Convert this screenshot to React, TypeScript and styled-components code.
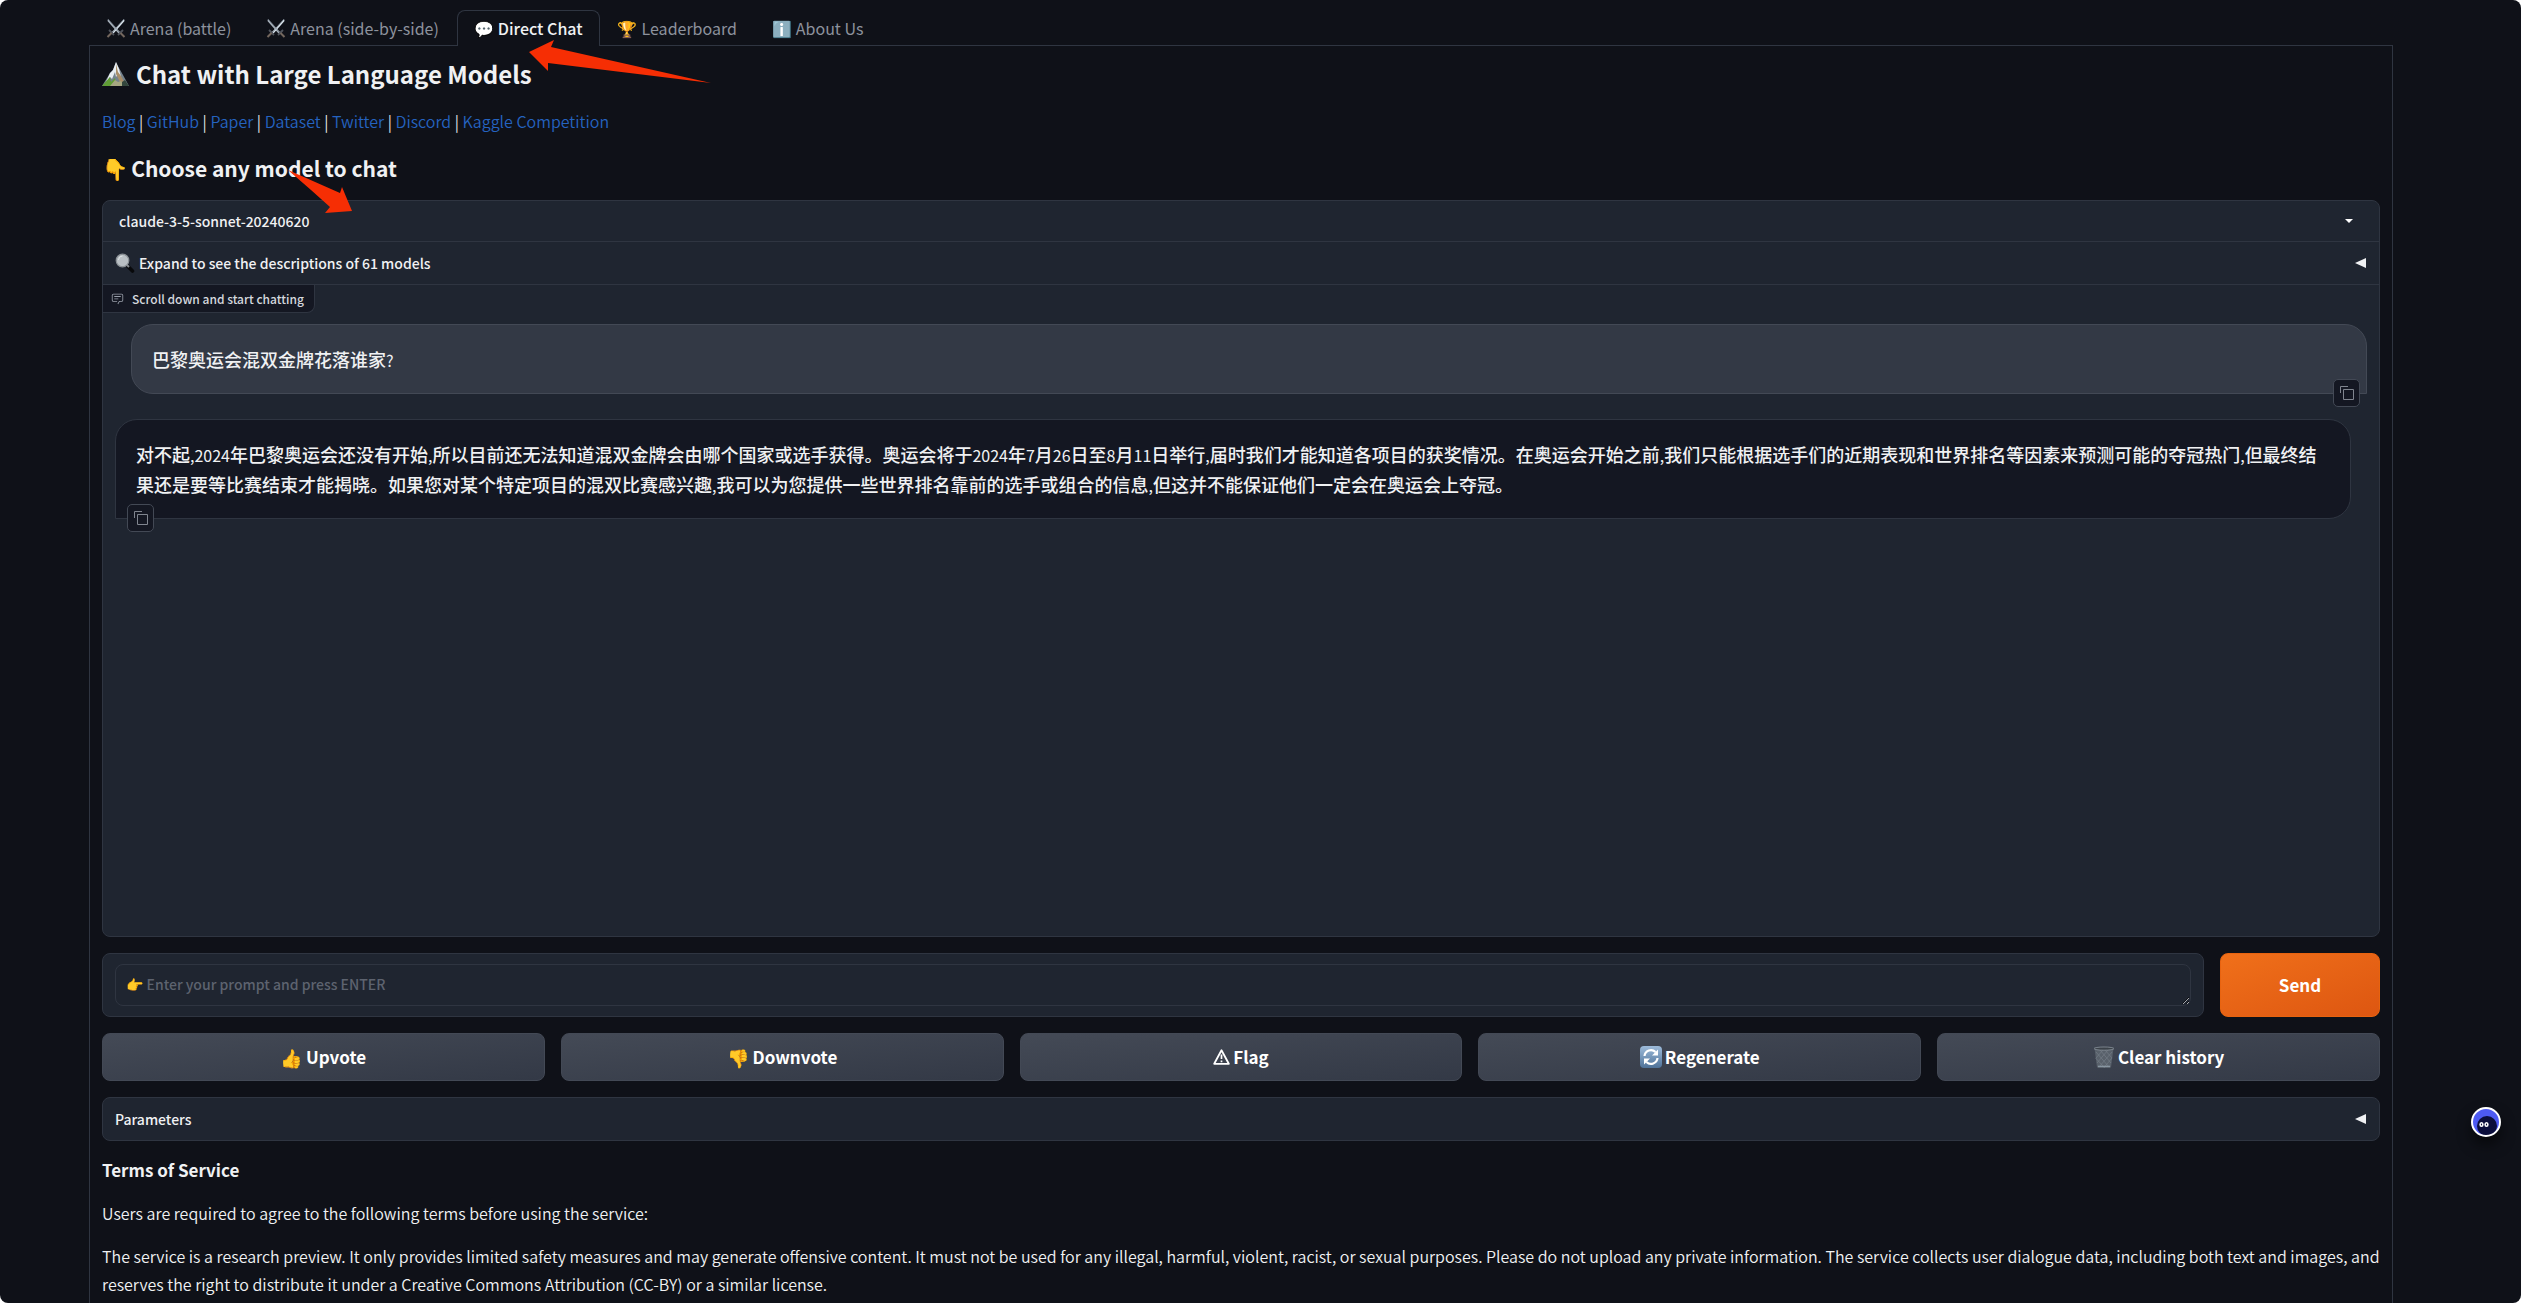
import React, { useState } from "react";
import styled, { createGlobalStyle, css } from "styled-components";

const color = {
  page: "#0f1118",
  panel: "#1f2530",
  deep: "#141722",
  bubble: "#333945",
  line: "#2f3541",
  lineLight: "#434955",
  text: "#f0f1f3",
  muted: "#8d929d",
  link: "#2563c0",
};

const Global = createGlobalStyle`
  *, *::before, *::after { box-sizing: border-box; }
  html { background: #fff; }
  body {
    margin: 0;
    color: ${color.text};
    font-family: "Noto Sans CJK SC", "Noto Color Emoji", sans-serif;
    font-size: 16px;
    line-height: 24px;
  }
  button, select, textarea { font: inherit; color: inherit; margin: 0; }
  h1, h2, h3, p { margin: 0; }
`;

const Shell = styled.div`
  position: relative;
  display: flex;
  flex-direction: column;
  min-height: 100vh;
  padding: 10px 128px 0 89px;
  background: ${color.page};
  border-radius: 8px;
`;

const TabBar = styled.nav`
  display: flex;
  gap: 1px;
  border-bottom: 1px solid ${color.line};
`;

const Tab = styled.button<{ $active?: boolean }>`
  display: flex;
  align-items: center;
  gap: 4px;
  height: 36px;
  margin-bottom: -1px;
  padding: 0 16px 2px;
  border: 1px solid transparent;
  border-bottom: 0;
  border-radius: 8px 8px 0 0;
  background: none;
  color: ${color.muted};
  ${(p) =>
    p.$active &&
    css`
      background: ${color.page};
      border-color: ${color.line};
      color: ${color.text};
      font-weight: 500;
    `}
`;

const Panel = styled.main`
  flex: 1;
  display: flex;
  flex-direction: column;
  padding: 12px 12px 0;
  border: 1px solid ${color.line};
  border-width: 0 1px;
`;

const Title = styled.h1`
  display: flex;
  align-items: center;
  gap: 7px;
  margin-bottom: 19px;
  font-size: 24px;
  line-height: 32px;
  font-weight: 700;
`;

const Links = styled.p`
  margin-bottom: 21px;
  font-weight: 350;
`;

const Anchor = styled.a`
  color: ${color.link};
  text-decoration: none;
`;

const Subtitle = styled.h3`
  display: flex;
  gap: 3px;
  margin-bottom: 18px;
  font-size: 21px;
  line-height: 28px;
  font-weight: 700;
`;

const Stack = styled.section`
  border: 1px solid ${color.line};
  border-radius: 8px;
  background: ${color.panel};
  overflow: hidden;
`;

const SelectRow = styled.label`
  display: flex;
  align-items: center;
  padding-right: 26px;
  border-bottom: 1px solid ${color.line};
`;

const ModelSelect = styled.select`
  flex: 1;
  height: 40px;
  padding: 0 16px;
  border: 0;
  background: none;
  appearance: none;
  font-size: 14px;
  font-weight: 500;
`;

const Fold = styled.button<{ $card?: boolean }>`
  display: flex;
  align-items: center;
  justify-content: space-between;
  width: 100%;
  height: 43px;
  padding: 0 13px 0 12px;
  border: 0 solid ${color.line};
  border-bottom-width: 1px;
  background: none;
  font-size: 14px;
  font-weight: 500;
  ${(p) =>
    p.$card &&
    css`
      height: 44px;
      margin: 16px 0 15px;
      border-width: 1px;
      border-radius: 8px;
      background: ${color.panel};
    `}
`;

const FoldLabel = styled.span`
  display: flex;
  align-items: center;
  gap: 4px;
`;

const Chat = styled.div`
  display: flex;
  flex-direction: column;
  align-items: flex-start;
  min-height: 651px;
`;

const ChatLabel = styled.div`
  display: flex;
  align-items: center;
  gap: 8px;
  height: 28px;
  padding: 0 10px 0 8px;
  border: 1px solid ${color.line};
  border-width: 0 1px 1px 0;
  border-bottom-right-radius: 8px;
  background: ${color.deep};
  font-size: 12px;
  font-weight: 500;
  color: #d5d8de;
`;

const Messages = styled.div`
  display: flex;
  flex-direction: column;
  gap: 25px;
  width: 100%;
  padding: 11px 12px;
`;

const Bubble = styled.div<{ $user?: boolean }>`
  position: relative;
  padding: 19px 20px;
  border: 1px solid ${(p) => (p.$user ? color.lineLight : color.line)};
  border-radius: ${(p) => (p.$user ? "22px 22px 0 22px" : "22px 22px 22px 0")};
  margin: ${(p) => (p.$user ? "0 0 0 16px" : "0 16px 0 0")};
  background: ${(p) => (p.$user ? color.bubble : color.deep)};
  font-size: 18px;
  font-weight: 500;
  line-height: 30px;
`;

const Latin = styled.span`
  font-size: 16px;
  line-height: 16px;
  font-weight: 400;
`;

const CopyButton = styled.button<{ $right?: boolean }>`
  position: absolute;
  bottom: -14px;
  ${(p) => (p.$right ? "right: 6px;" : "left: 11px;")}
  display: grid;
  place-items: center;
  width: 27px;
  height: 28px;
  padding: 0;
  border: 1px solid ${color.lineLight};
  border-radius: 5px;
  background: ${color.deep};
`;

const PromptRow = styled.form`
  display: flex;
  gap: 16px;
  margin: 16px 0;
`;

const PromptBox = styled.div`
  flex: 1;
  display: flex;
  padding: 10px 12px;
  border: 1px solid ${color.line};
  border-radius: 8px;
  background: ${color.panel};
`;

const Prompt = styled.textarea`
  flex: 1;
  height: 42px;
  padding: 9px 10px;
  border: 1px solid ${color.line};
  border-radius: 8px;
  background: none;
  resize: vertical;
  color-scheme: dark;
  font-size: 14px;
  font-weight: 500;
  line-height: 20px;
  overflow: hidden;
  &::placeholder { color: #5d636f; opacity: 1; }
`;

const SendButton = styled.button`
  width: 160px;
  border: 1px solid #e8630f;
  border-radius: 8px;
  background: linear-gradient(to bottom right, #f0701a, #dd5611);
  color: #fff;
  font-size: 17px;
  font-weight: 700;
`;

const Actions = styled.div`
  display: grid;
  grid-template-columns: repeat(5, 1fr);
  gap: 16px;
`;

const Action = styled.button`
  display: flex;
  align-items: center;
  justify-content: center;
  gap: 3px;
  height: 48px;
  border: 1px solid #434955;
  border-radius: 8px;
  background: linear-gradient(to bottom right, #444a56, #333946);
  color: #fff;
  font-size: 17px;
  font-weight: 700;
`;

const Emoji = styled.span`
  font-size: 18px;
`;

const Terms = styled.footer`
  display: flex;
  flex-direction: column;
  gap: 15px;
  line-height: 28px;
  font-weight: 350;
`;

const TermsTitle = styled.h2`
  font-size: 17px;
  line-height: 28px;
  font-weight: 700;
`;

const Arrows = styled.svg`
  position: absolute;
  top: 0;
  left: 0;
  pointer-events: none;
`;

const Assistant = styled.button`
  position: fixed;
  right: 20px;
  bottom: 166px;
  width: 30px;
  height: 30px;
  padding: 0;
  border: 0;
  border-radius: 50%;
  background: none;
  box-shadow: 0 8px 14px #0008;
`;

const Swords = () => (
  <svg width="20" height="20" viewBox="0 0 20 20" aria-hidden="true">
    <path d="M2 1l12 13-1.500 1.500L1.500 3z" fill="#a9b3bd" />
    <path d="M18 1L6 14l1.500 1.500L18.500 3z" fill="#dbe6ee" />
    <path d="M2 1l11.500 13.500M18 1L6.500 14.500" stroke="#67727d" strokeWidth=".6" />
    <path d="M3 12l5 5M17 12l-5 5" stroke="#50545c" strokeWidth="1.800" />
    <path d="M5.500 15L1.500 19M14.500 15l4 4" stroke="#74675d" strokeWidth="2" />
  </svg>
);

const Mountain = () => (
  <svg width="27" height="26" viewBox="0 0 27 26" aria-hidden="true">
    <path d="M0 25L5 17l3-5 3-3 3-8 3 6 4 7 6 11z" fill="#75838d" />
    <path d="M14 1l-3 8-3 3-4 9 4-5 2 2 3-7 1 5 2-3 3 3-2-8z" fill="#e9eef2" />
    <path d="M14 3l2 8 3 4 5 9-6-3-4-8z" fill="#a98e69" />
    <path d="M0 25l8-9 1 5 4-4 1 8z" fill="#609d35" />
    <path d="M8 25l5-6 3 2 3-1 3 5z" fill="#a6a781" />
    <path d="M20 21l3-2 4 6h-7z" fill="#33463c" />
  </svg>
);

const Magnifier = () => (
  <svg width="20" height="20" viewBox="0 0 20 20" aria-hidden="true">
    <path d="M12.500 13l5 5" stroke="#08090b" strokeWidth="3.600" strokeLinecap="round" />
    <path d="M11.500 11.500l2.500 2.500" stroke="#888d92" strokeWidth="2" />
    <circle cx="7.500" cy="7.500" r="6.300" fill="#b9bfc3" stroke="#8a9095" strokeWidth="1.200" />
    <path d="M3.500 7a4 4 0 0 1 4-4" stroke="#dfe3e5" fill="none" />
  </svg>
);

const Refresh = () => (
  <svg width="22" height="22" viewBox="0 0 22 22" aria-hidden="true">
    <defs>
      <linearGradient id="tile" x2="0" y2="1">
        <stop stopColor="#9dbbda" />
        <stop offset="1" stopColor="#4f7298" />
      </linearGradient>
    </defs>
    <rect width="22" height="22" rx="4" fill="url(#tile)" />
    <path d="M4.500 10a6.500 6.500 0 0 1 11-4M17.500 12a6.500 6.500 0 0 1-11 4" stroke="#fff" strokeWidth="2.200" fill="none" />
    <path d="M18 3.500v6h-6zM4 18.500v-6h6z" fill="#fff" />
  </svg>
);

const Trash = () => (
  <svg width="22" height="22" viewBox="0 0 22 22" aria-hidden="true">
    <path d="M1.500 2h19l-2.500 19.500H4z" fill="#59616b" />
    <path d="M3 6l13 15M7 4l11 13M12 4l7 8M2.500 12l9 9.500M19 6L6 21M15 4L4 17M10 4l-7 8M19 12l-8 9.500" stroke="#747d86" strokeWidth=".7" />
    <ellipse cx="11" cy="2.600" rx="10" ry="1.600" fill="#3b4148" stroke="#818a93" strokeWidth=".9" />
    <path d="M5 20.500h12" stroke="#8996a2" strokeWidth="1.600" />
  </svg>
);

const Warning = () => (
  <svg width="17" height="16" viewBox="0 0 17 16" fill="none" stroke="#fff" aria-hidden="true">
    <path d="M8.500 1.200L15.800 14.800H1.200z" strokeWidth="1.800" strokeLinejoin="round" />
    <path d="M8.500 5.500v4.500M8.500 11.500v1.700" strokeWidth="1.700" />
  </svg>
);

const ChatIcon = () => (
  <svg width="13" height="13" viewBox="0 0 32 32" fill="#9aa0ab" aria-hidden="true">
    <path d="M17.740 30L16 29l4-7h6a2 2 0 0 0 2-2V8a2 2 0 0 0-2-2H6a2 2 0 0 0-2 2v12a2 2 0 0 0 2 2h9v2H6a4 4 0 0 1-4-4V8a4 4 0 0 1 4-4h20a4 4 0 0 1 4 4v12a4 4 0 0 1-4 4h-4.840z" />
    <path d="M8 10h16v2H8zM8 16h10v2H8z" />
  </svg>
);

const CopyIcon = () => (
  <svg width="14" height="14" viewBox="0 0 14 14" fill="none" stroke="#80858f" aria-hidden="true">
    <path d="M.5 7V.5H8" />
    <path d="M3.500 3.500h10v10h-10z" />
  </svg>
);

const Caret = () => (
  <svg width="8" height="4" viewBox="0 0 8 4" aria-hidden="true">
    <path d="M0 0h8L4 4z" fill="#fff" />
  </svg>
);

const LeftTriangle = () => (
  <svg width="11" height="10" viewBox="0 0 11 10" aria-hidden="true">
    <path d="M0 5L11 0v10z" fill="#f0f1f3" />
  </svg>
);

const Mixed = ({ text }: { text: string }) => (
  <>
    {text.split(/([0-9,?]+)/).map((part, i) => (i % 2 ? <Latin key={i}>{part}</Latin> : part))}
  </>
);

const tabs: [React.ReactNode, string][] = [
  [<Swords />, "Arena (battle)"],
  [<Swords />, "Arena (side-by-side)"],
  ["💬", "Direct Chat"],
  ["🏆", "Leaderboard"],
  ["ℹ️", "About Us"],
];

const links = ["Blog", "GitHub", "Paper", "Dataset", "Twitter", "Discord", "Kaggle Competition"];

const actions: [React.ReactNode, string][] = [
  [<Emoji>👍</Emoji>, "Upvote"],
  [<Emoji>👎</Emoji>, "Downvote"],
  [<Warning />, "Flag"],
  [<Refresh />, "Regenerate"],
  [<Trash />, "Clear history"],
];

const question = "巴黎奥运会混双金牌花落谁家?";
const answer =
  "对不起,2024年巴黎奥运会还没有开始,所以目前还无法知道混双金牌会由哪个国家或选手获得。奥运会将于2024年7月26日至8月11日举行,届时我们才能知道各项目的获奖情况。在奥运会开始之前,我们只能根据选手们的近期表现和世界排名等因素来预测可能的夺冠热门,但最终结果还是要等比赛结束才能揭晓。如果您对某个特定项目的混双比赛感兴趣,我可以为您提供一些世界排名靠前的选手或组合的信息,但这并不能保证他们一定会在奥运会上夺冠。";

export default function App() {
  const [active, setActive] = useState(2);
  return (
    <Shell>
      <Global />
      <TabBar>
        {tabs.map(([icon, label], i) => (
          <Tab key={label} type="button" $active={i === active} onClick={() => setActive(i)}>
            <>{icon}</>
            <span>{label}</span>
          </Tab>
        ))}
      </TabBar>
      <Panel>
        <Title>
          <Mountain />
          Chat with Large Language Models
        </Title>
        <Links>
          {links.map((name, i) => (
            <React.Fragment key={name}>
              {i > 0 && " | "}
              <Anchor href="#">{name}</Anchor>
            </React.Fragment>
          ))}
        </Links>
        <Subtitle>
          <span>👇</span>
          <span>Choose any model to chat</span>
        </Subtitle>
        <Stack>
          <SelectRow>
            <ModelSelect aria-label="Model">
              <option>claude-3-5-sonnet-20240620</option>
            </ModelSelect>
            <Caret />
          </SelectRow>
          <Fold type="button">
            <FoldLabel>
              <Magnifier />
              Expand to see the descriptions of 61 models
            </FoldLabel>
            <LeftTriangle />
          </Fold>
          <Chat>
            <ChatLabel>
              <ChatIcon />
              Scroll down and start chatting
            </ChatLabel>
            <Messages>
              <Bubble $user>
                <Mixed text={question} />
                <CopyButton type="button" $right aria-label="Copy message">
                  <CopyIcon />
                </CopyButton>
              </Bubble>
              <Bubble>
                <Mixed text={answer} />
                <CopyButton type="button" aria-label="Copy message">
                  <CopyIcon />
                </CopyButton>
              </Bubble>
            </Messages>
          </Chat>
        </Stack>
        <PromptRow onSubmit={(e) => e.preventDefault()}>
          <PromptBox>
            <Prompt aria-label="Prompt" rows={1} placeholder="👉 Enter your prompt and press ENTER" />
          </PromptBox>
          <SendButton type="submit">Send</SendButton>
        </PromptRow>
        <Actions>
          {actions.map(([icon, label]) => (
            <Action key={label} type="button">
              <>{icon}</>
              <span>{label}</span>
            </Action>
          ))}
        </Actions>
        <Fold type="button" $card>
          Parameters
          <LeftTriangle />
        </Fold>
        <Terms>
          <TermsTitle>Terms of Service</TermsTitle>
          <p>Users are required to agree to the following terms before using the service:</p>
          <p>
            The service is a research preview. It only provides limited safety measures and may generate offensive
            content. It must not be used for any illegal, harmful, violent, racist, or sexual purposes. Please do not
            upload any private information. The service collects user dialogue data, including both text and images,
            and reserves the right to distribute it under a Creative Commons Attribution (CC-BY) or a similar license.
          </p>
        </Terms>
      </Panel>
      <Arrows width="720" height="220" viewBox="0 0 720 220" fill="#f62e04" aria-hidden="true">
        <path d="M529 52L554 40L551 47L711 83L548 63L548 71Z" />
        <path d="M288 170L340 193L342 187L352 211L325 213L330 207L311 190Z" />
      </Arrows>
      <Assistant type="button" aria-label="Open assistant">
        <svg width="30" height="30" viewBox="0 0 30 30" aria-hidden="true">
          <circle cx="15" cy="15" r="14" fill="#4d5af2" />
          <circle cx="16" cy="19" r="10" fill="#0b0e3c" />
          <circle cx="15" cy="15" r="14" fill="none" stroke="#fff" strokeWidth="2" />
          <g fill="none" stroke="#fff" strokeWidth="1.600">
            <ellipse cx="10.500" cy="17.500" rx="1.400" ry="1.700" />
            <ellipse cx="15.500" cy="17.500" rx="1.400" ry="1.700" />
          </g>
        </svg>
      </Assistant>
    </Shell>
  );
}
